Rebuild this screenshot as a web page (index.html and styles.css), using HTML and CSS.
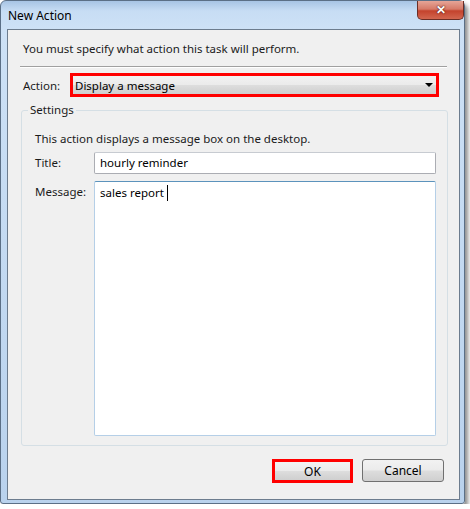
FILE: index.html
```html
<!DOCTYPE html>
<html lang="en">
<head>
<meta charset="UTF-8">
<title>New Action</title>
<link rel="stylesheet" href="styles.css">
</head>
<body>
<div class="window">
    <div class="titlebar">
        <span class="title">New Action</span>
        <button class="close-btn">&#x2715;</button>
    </div>
    <div class="client">
        <div class="intro">You must specify what action this task will perform.</div>
        <div class="separator"></div>
        <div class="action-row">
            <label class="action-label">Action:</label>
            <div class="select">
                <span>Display a message</span>
                <span class="arrow"></span>
            </div>
        </div>
        <fieldset class="settings">
            <legend>Settings</legend>
            <div class="desc">This action displays a message box on the desktop.</div>
            <div class="form-grid">
                <label class="field-label">Title:</label>
                <div class="textbox">hourly reminder</div>
                <label class="field-label">Message:</label>
                <div class="textarea">sales report <span class="caret"></span></div>
            </div>
        </fieldset>
        <div class="buttons">
            <button class="btn btn-ok">OK</button>
            <button class="btn">Cancel</button>
        </div>
    </div>
</div>
</body>
</html>
```

FILE: styles.css
```css
body {
    margin: 0;
    background-color: #fff;
    font-family: "Noto Sans", "DejaVu Sans", sans-serif;
    font-size: 11.5px;
    color: #1b1b1b;
}
.window {
    width: 465px;
    height: 504px;
    box-sizing: border-box;
    border: 1px solid #5b6f86;
    border-radius: 6px 6px 3px 3px;
    background: linear-gradient(to bottom, #a7c4e4 0, #c7ddf4 10px, #cde1f6 28px, #b9d2ed 100%);
    box-shadow: 3px 4px 4px rgba(0, 0, 0, 0.45);
}
.titlebar {
    display: flex;
    justify-content: space-between;
    align-items: flex-start;
    height: 28px;
}
.title {
    padding: 6px 0 0 7px;
    font-size: 12px;
    color: #000;
}
.close-btn {
    width: 47px;
    height: 19px;
    margin-right: 0;
    padding: 0;
    border: 1px solid #6b2e25;
    border-top: none;
    border-radius: 0 0 5px 5px;
    background: linear-gradient(to bottom, #e6a597 0, #d67a68 45%, #c4432d 55%, #d2664f 100%);
    color: #fff;
    font-size: 12px;
    font-weight: bold;
    line-height: 17px;
    text-shadow: 0 0 2px #5a1d12, 0 0 1px #5a1d12;
}
.client {
    margin-left: 6px;
    width: 453px;
    height: 471px;
    box-sizing: border-box;
    border: 1px solid #6c7c8e;
    background-color: #f0f0f0;
    padding-top: 11px;
}
.intro {
    padding-left: 15px;
    line-height: 16px;
}
.separator {
    margin: 9px 0 0 12px;
    width: 427px;
    height: 1px;
    background-color: #a0a0a0;
    border-bottom: 1px solid #fff;
}
.action-row {
    display: flex;
    align-items: center;
    margin-top: 5px;
    height: 24px;
}
.action-label {
    width: 47px;
    padding-left: 15px;
}
.select {
    display: flex;
    justify-content: space-between;
    align-items: center;
    width: 369px;
    height: 24px;
    box-sizing: border-box;
    border: 3px solid #f00;
    padding: 0 3px 0 2px;
    background: linear-gradient(to bottom, #f2f2f2 0, #ebebeb 48%, #dddddd 52%, #cfcfcf 100%);
    color: #000;
}
.arrow {
    width: 0;
    height: 0;
    border-left: 4px solid transparent;
    border-right: 4px solid transparent;
    border-top: 4px solid #000;
}
.settings {
    margin: 6px 0 0 13px;
    width: 427px;
    height: 343px;
    box-sizing: border-box;
    border: 1px solid #d5dfe5;
    border-radius: 3px;
    padding: 0 11px 10px 13px;
}
.settings legend {
    padding: 0 2px;
    margin-left: -7px;
    line-height: 14px;
}
.desc {
    line-height: 16px;
    margin-top: 14px;
}
.form-grid {
    display: grid;
    grid-template-columns: 59px 1fr;
    grid-template-rows: 22px 255px;
    row-gap: 7px;
    margin-top: 5px;
}
.field-label {
    line-height: 16px;
    padding-top: 3px;
}
.textbox,
.textarea {
    box-sizing: border-box;
    background-color: #fff;
    border: 1px solid #abadb3;
    border-top-color: #c7cbd1;
    border-radius: 2px;
    padding: 2px 5px;
    line-height: 16px;
    color: #000;
}
.textarea {
    border-color: #5c93bc #b5cfe7 #b5cfe7 #b5cfe7;
    padding-top: 3px;
}
.caret {
    display: inline-block;
    width: 1px;
    height: 16px;
    background-color: #000;
    vertical-align: top;
}
.buttons {
    display: flex;
    justify-content: flex-end;
    gap: 9px;
    margin: 13px 15px 0 0;
}
.btn {
    width: 82px;
    height: 23px;
    border: 1px solid #707070;
    border-radius: 3px;
    background: linear-gradient(to bottom, #f2f2f2 0, #ebebeb 48%, #dddddd 52%, #cfcfcf 100%);
    font-family: inherit;
    font-size: 12px;
    color: #000;
    padding: 0;
}
.btn-ok {
    width: 81px;
    height: 24px;
    border: 3px solid #f00;
    border-radius: 0;
}
```
